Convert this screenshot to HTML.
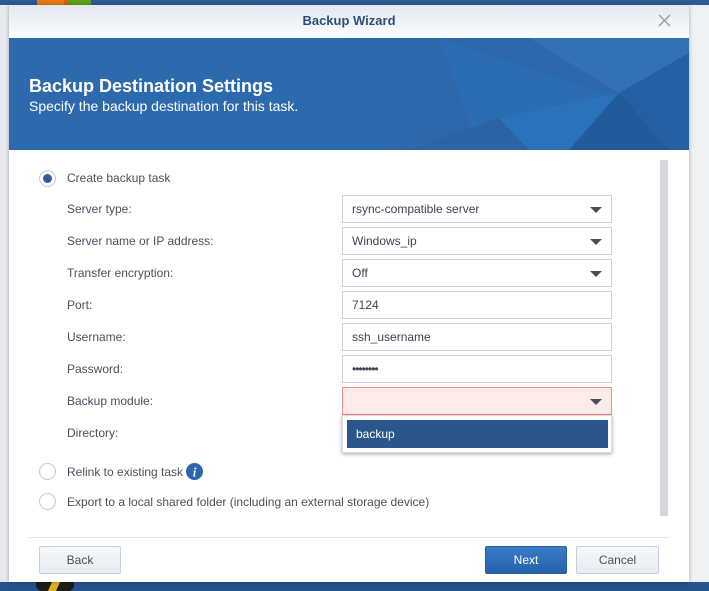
<!DOCTYPE html>
<html><head><meta charset="utf-8"><style>
*{margin:0;padding:0;box-sizing:border-box}
body{width:709px;height:591px;overflow:hidden;position:relative;background:#d9dce0;font-family:"Liberation Sans",sans-serif;font-size:12px;color:#4a505a}
.topbar{position:absolute;left:0;top:0;width:709px;height:5px;background:#2d5b96}
.botbar{position:absolute;left:0;top:582px;width:709px;height:9px;background:#24528c}
.rightbg{position:absolute;left:689px;top:5px;width:20px;height:577px;background:#eef0f2}
.leftbg{position:absolute;left:0;top:5px;width:9px;height:577px;background:#e6e8eb}
.dlg{position:absolute;left:9px;top:5px;width:680px;height:577px;background:#fff;box-shadow:0 0 4px rgba(0,0,0,.3)}
.title{height:33px;background:linear-gradient(#e3e8f0,#fbfcfd);text-align:center;line-height:31px;font-weight:bold;font-size:13px;color:#2e4d78}
.close{position:absolute;right:18px;top:9px}
.banner{position:absolute;left:0;top:33px;width:680px;height:112px;background:#2d6aad;overflow:hidden}
.banner h1{position:absolute;left:20px;top:38px;color:#fff;font-size:18px;font-weight:bold}
.banner p{position:absolute;left:20px;top:60px;color:#fff;font-size:14px}
.lbl{position:absolute;left:58px;font-size:12px;color:#4a505a}
.radio{position:absolute;left:30px;width:17px;height:17px;border:1px solid #c4cbd4;border-radius:50%;background:#fff}
.radio.on::after{content:"";position:absolute;left:3px;top:3px;width:9px;height:9px;border-radius:50%;background:#2c5d98}
.inp{position:absolute;left:333px;width:270px;height:28px;border:1px solid #c9d2de;background:#fff;padding-left:9px;line-height:26px;font-size:12px;color:#3e444c}
.inp svg{position:absolute;right:9px;top:11px}
.err{background:#fdebea;border-color:#f08f8f}
.dd{position:absolute;left:333px;top:410px;width:270px;height:38px;background:#fff;box-shadow:0 1px 4px rgba(0,0,0,.35);border:1px solid #d8dde3}
.dd div{position:absolute;left:4px;top:4px;width:261px;height:28px;background:#2a568b;color:#fff;line-height:28px;padding-left:9px}
.scroll{position:absolute;left:651px;top:155px;width:8px;height:356px;background:#d4d6d9}
.sep{position:absolute;left:20px;top:532px;width:640px;height:1px;background:#e4e6e9}
.btn{position:absolute;top:541px;height:28px;border:1px solid #c6d0dc;border-radius:2px;background:linear-gradient(#f6f8fa,#e8edf2);text-align:center;line-height:26px;color:#4a505a;font-size:12px}
.next{background:linear-gradient(#3a7bc8,#2662ab);border-color:#2a5e9e;color:#fff}
</style></head><body>
<div class="topbar"><div style="position:absolute;left:37px;width:27px;height:5px;background:#e87a16"></div><div style="position:absolute;left:64px;width:13px;height:5px;background:#e65a10"></div><div style="position:absolute;left:68px;width:23px;height:5px;background:#5ea11a"></div></div>
<div class="leftbg"></div><div class="rightbg"></div>
<div class="botbar"><div style="position:absolute;left:36px;top:0;width:38px;height:9px;background:#1d1d18;border-radius:0 0 6px 6px"></div><div style="position:absolute;left:50px;top:0;width:8px;height:9px;background:#e0b020;transform:skewX(-25deg)"></div></div>
<div class="dlg">
<div class="title">Backup Wizard</div>
<svg class="close" width="13" height="13" viewBox="0 0 13 13"><path d="M1 1L12 12M12 1L1 12" stroke="#9aa0a6" stroke-width="1.5"/></svg>
<div class="banner">
<svg width="680" height="112" style="position:absolute;left:0;top:0">
<polygon points="335,0 680,0 680,112 390,112" fill="#2c68aa"/>
<polygon points="430,0 610,60 680,112 470,112" fill="#2b6db2"/>
<polygon points="520,0 680,0 680,15 610,55" fill="#3272b4"/>
<polygon points="610,55 680,15 680,112 640,112" fill="#2460a2"/>
<polygon points="490,80 610,55 560,112 520,112" fill="#2a73ba"/>
<polygon points="610,55 660,112 560,112" fill="#235a9b"/>
<polygon points="400,112 490,80 520,112" fill="#2a64a4"/>
</svg>
<h1>Backup Destination Settings</h1>
<p>Specify the backup destination for this task.</p>
</div>
<div class="radio on" style="top:165px"></div><div class="lbl" style="top:166px">Create backup task</div>
<div class="lbl" style="top:197px">Server type:</div>
<div class="lbl" style="top:229px">Server name or IP address:</div>
<div class="lbl" style="top:261px">Transfer encryption:</div>
<div class="lbl" style="top:293px">Port:</div>
<div class="lbl" style="top:325px">Username:</div>
<div class="lbl" style="top:357px">Password:</div>
<div class="lbl" style="top:389px">Backup module:</div>
<div class="lbl" style="top:421px">Directory:</div>
<div class="inp" style="top:190px">rsync-compatible server<svg width="12" height="6"><path d="M0 0H12L6 6Z" fill="#4a4f57"/></svg></div>
<div class="inp" style="top:222px">Windows_ip<svg width="12" height="6"><path d="M0 0H12L6 6Z" fill="#4a4f57"/></svg></div>
<div class="inp" style="top:254px">Off<svg width="12" height="6"><path d="M0 0H12L6 6Z" fill="#4a4f57"/></svg></div>
<div class="inp" style="top:286px">7124</div>
<div class="inp" style="top:318px">ssh_username</div>
<div class="inp" style="top:350px;font-size:12px;letter-spacing:-1px">••••••••</div>
<div class="inp err" style="top:382px"><svg width="12" height="6"><path d="M0 0H12L6 6Z" fill="#4a4f57"/></svg></div>
<div class="dd"><div>backup</div></div>
<div class="radio" style="top:458px"></div><div class="lbl" style="top:460px">Relink to existing task</div>
<svg style="position:absolute;left:177px;top:458px" width="17" height="17"><circle cx="8.5" cy="8.5" r="8.5" fill="#2c65ac"/><text x="8.5" y="13.5" text-anchor="middle" fill="#fff" font-family="Liberation Serif" font-style="italic" font-weight="bold" font-size="13">i</text></svg>
<div class="radio" style="top:488px"></div><div class="lbl" style="top:490px">Export to a local shared folder (including an external storage device)</div>
<div class="scroll"></div>
<div class="sep"></div>
<div class="btn" style="left:30px;width:82px">Back</div>
<div class="btn next" style="left:476px;width:82px">Next</div>
<div class="btn" style="left:567px;width:83px">Cancel</div>
</div>
</body></html>
